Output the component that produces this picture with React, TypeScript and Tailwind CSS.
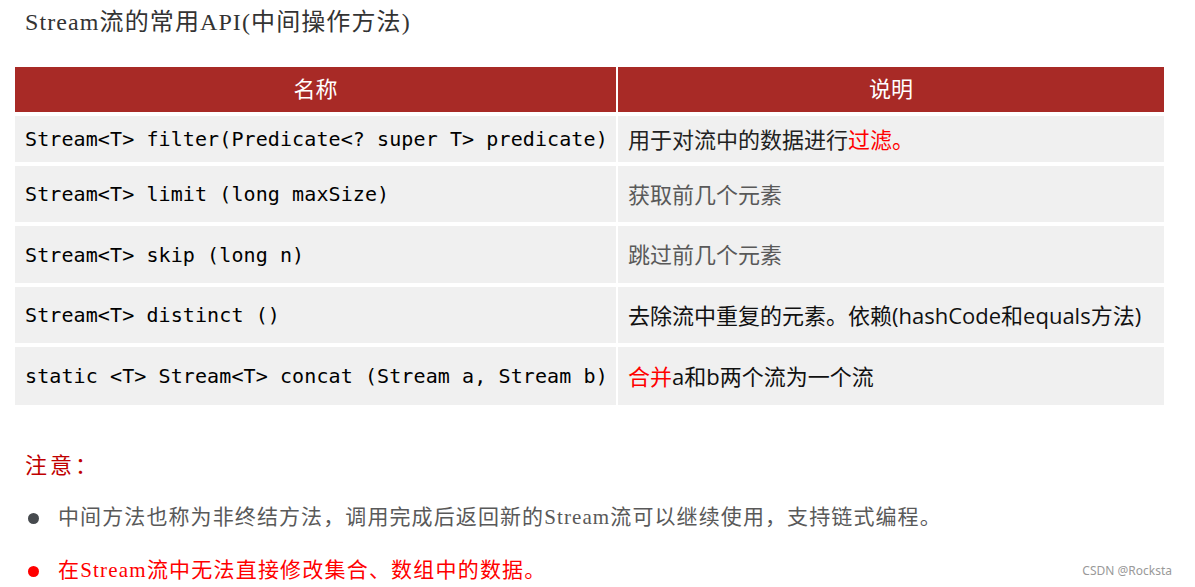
import React from "react";

const serif = { fontFamily: '"Liberation Serif", "Noto Sans CJK SC", serif' };
const mono = { fontFamily: '"DejaVu Sans Mono", "Liberation Mono", monospace' };
const sans = { fontFamily: '"Open Sans", "Noto Sans CJK SC", sans-serif' };
const sans2 = { fontFamily: '"Noto Sans", "Noto Sans CJK SC", sans-serif' };

type Row = { code: string; desc: React.ReactNode; h: string };

const rows: Row[] = [
  {
    code: "Stream<T> filter(Predicate<? super T> predicate)",
    h: "h-[46px]",
    desc: (
      <span className="text-[#222]">
        用于对流中的数据进行<span className="text-[#ff0000]">过滤。</span>
      </span>
    ),
  },
  {
    code: "Stream<T> limit (long maxSize)",
    h: "h-[56px]",
    desc: <span className="text-[#595959]">获取前几个元素</span>,
  },
  {
    code: "Stream<T> skip (long n)",
    h: "h-[57px]",
    desc: <span className="text-[#595959]">跳过前几个元素</span>,
  },
  {
    code: "Stream<T> distinct ()",
    h: "h-[56px]",
    desc: <span className="text-[#111]">去除流中重复的元素。依赖(hashCode和equals方法)</span>,
  },
  {
    code: "static <T> Stream<T> concat (Stream a, Stream b)",
    h: "h-[58px]",
    desc: (
      <span className="text-[#111]">
        <span className="text-[#ff0000]">合并</span>a和b两个流为一个流
      </span>
    ),
  },
];

export default function App() {
  return (
    <div className="w-[1195px] h-[587px] bg-white relative overflow-hidden">
      <div
        className="h-[67px] pl-[25px] pt-[6px] text-[24px] leading-[32px] tracking-[1.1px] text-[#333]"
        style={serif}
      >
        Stream流的常用API(中间操作方法)
      </div>

      <div className="ml-[15px] w-[1149px] flex flex-col gap-[4px]">
        <div className="flex gap-[2px] h-[45px]">
          <div
            className="w-[601px] bg-[#a82a26] flex items-center justify-center text-white text-[22px]"
            style={serif}
          >
            名称
          </div>
          <div
            className="flex-1 bg-[#a82a26] flex items-center justify-center text-white text-[22px]"
            style={serif}
          >
            说明
          </div>
        </div>
        {rows.map((r, i) => (
          <div key={i} className={`flex gap-[2px] ${r.h}`}>
            <div
              className="w-[601px] bg-[#f0f0f0] flex items-center pl-[10px] text-[20px] tracking-[0.1px] text-black whitespace-pre"
              style={mono}
            >
              {r.code}
            </div>
            <div
              className="flex-1 bg-[#f0f0f0] flex items-center pl-[10px] text-[22px] whitespace-nowrap"
              style={sans}
            >
              {r.desc}
            </div>
          </div>
        ))}
      </div>

      <div
        className="pl-[25px] mt-[47px] text-[22px] leading-[28px] tracking-[3px] text-[#c00000]"
        style={serif}
      >
        注意：
      </div>

      <div className="mt-[24px] flex items-center h-[28px] pl-[28px]">
        <span className="w-[11px] h-[11px] rounded-full bg-[#464a4e] shrink-0" />
        <span
          className="ml-[19px] text-[21px] tracking-[1.1px] text-[#595959] whitespace-nowrap"
          style={serif}
        >
          中间方法也称为非终结方法，调用完成后返回新的Stream流可以继续使用，支持链式编程。
        </span>
      </div>

      <div className="mt-[25px] flex items-center h-[28px] pl-[28px]">
        <span className="w-[11px] h-[11px] rounded-full bg-[#ff0000] shrink-0" />
        <span
          className="ml-[19px] text-[21px] tracking-[1.2px] text-[#ff0000] whitespace-nowrap"
          style={serif}
        >
          在Stream流中无法直接修改集合、数组中的数据。
        </span>
      </div>

      <div className="absolute right-[23px] bottom-[7px] text-[12px] text-[#999]" style={sans2}>
        CSDN @Rocksta
      </div>
    </div>
  );
}
